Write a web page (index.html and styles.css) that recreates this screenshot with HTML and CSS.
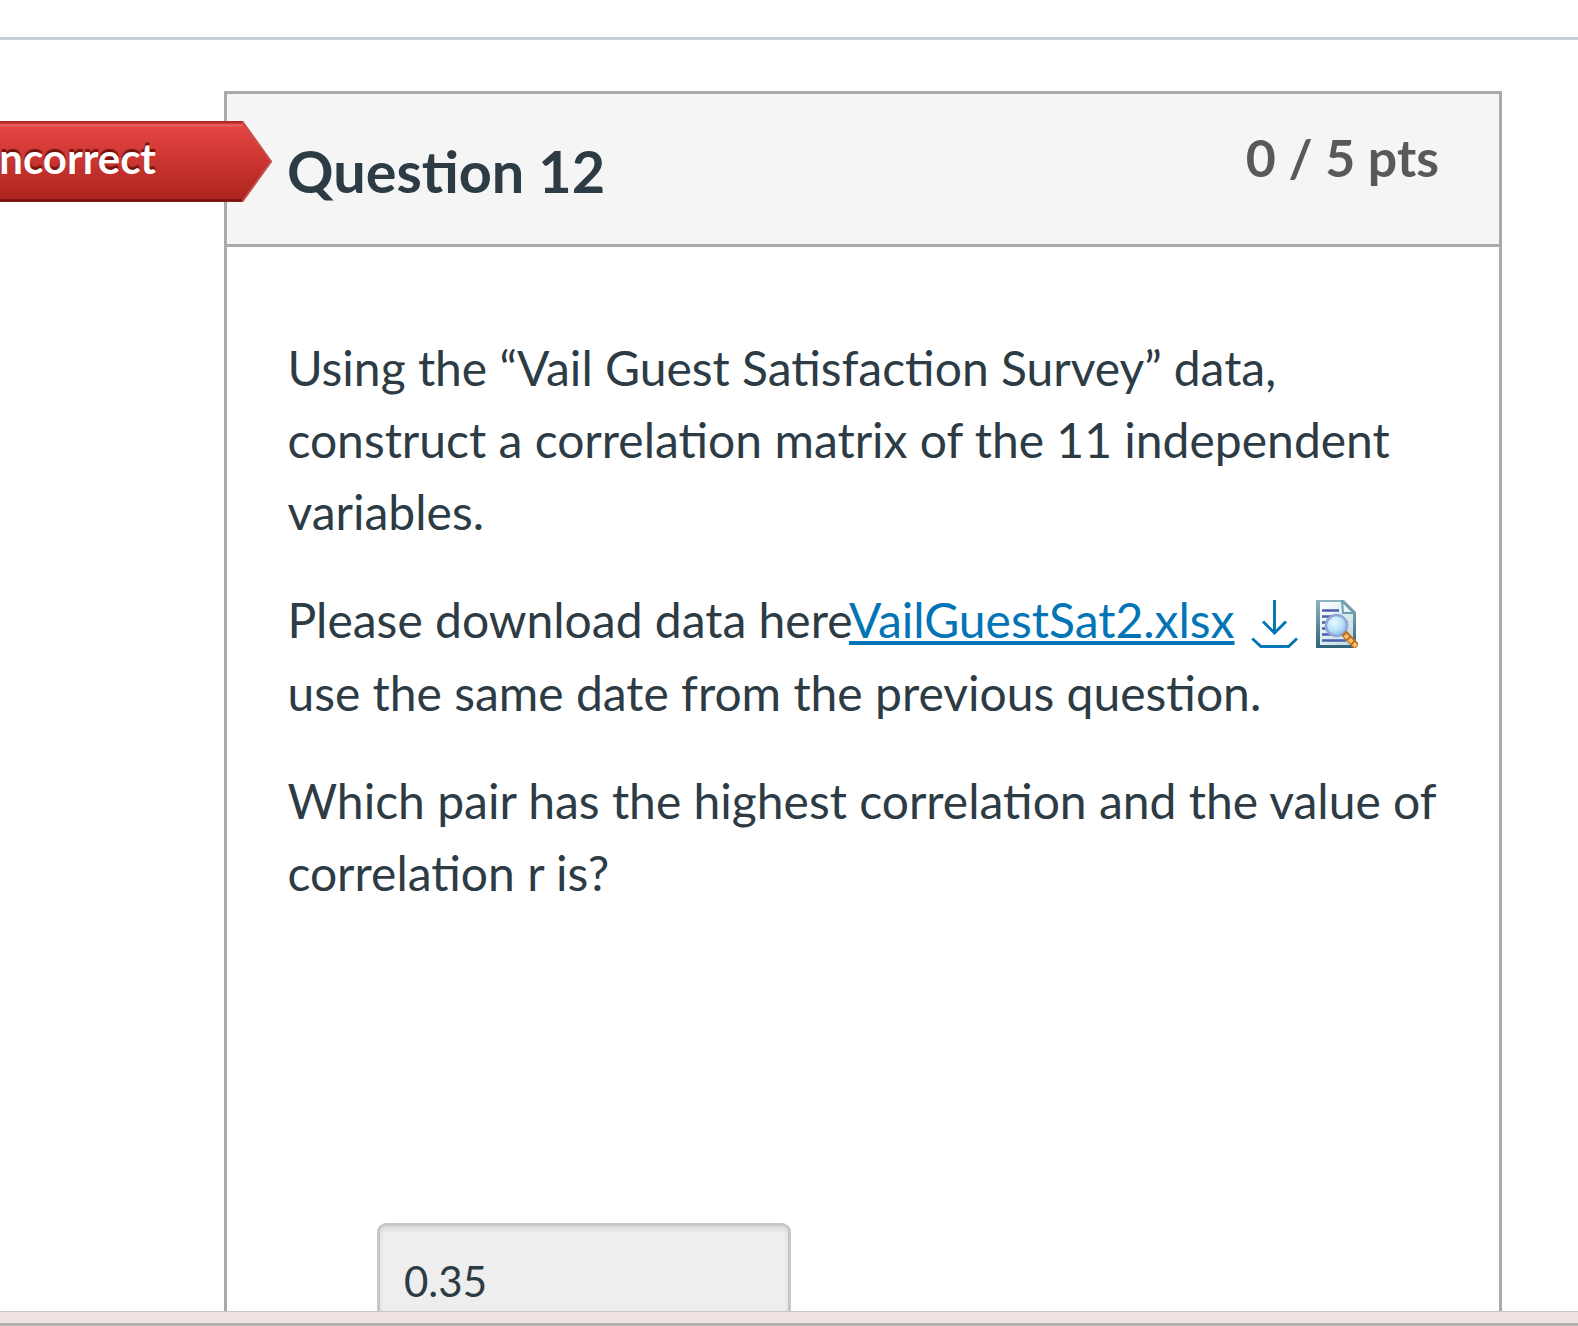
FILE: index.html
```
<!DOCTYPE html>
<html lang="en">
<head>
  <meta charset="UTF-8" />
  <meta name="viewport" content="width=device-width, initial-scale=1.0"/>
  <title>Question 12</title>
  <link rel="stylesheet" href="styles.css">
</head>
<body>

<main class="page">
  <section class="question">
    <!-- Result flag -->
    <div class="flag">
      <svg class="flag-shape" width="272" height="81" viewBox="0 0 272 81">
        <defs>
          <linearGradient id="red" x1="0" y1="0" x2="0" y2="1">
            <stop offset="0" stop-color="#e84a46"/>
            <stop offset="0.1" stop-color="#e34441"/>
            <stop offset="0.9" stop-color="#b22620"/>
            <stop offset="1" stop-color="#a9201c"/>
          </linearGradient>
        </defs>
        <path d="M0 0H242L272 40.5L242 81H0Z" fill="url(#red)"/>
        <path d="M0 4.5H242" stroke="#e8605c" stroke-width="2"/>
        <path d="M242 0L271 40.5L242 81" fill="none" stroke="#c4504e" stroke-width="2"/>
        <path d="M0 1.2H242" stroke="#b12a28" stroke-width="2.4"/>
        <path d="M0 79.4H242" stroke="#75130f" stroke-width="2.4"/>
      </svg>
      <span class="flag-text">Incorrect</span>
    </div>

    <header class="question-header">
      <h1 class="question-name">Question 12</h1>
      <div class="question-points">0 / 5 pts</div>
    </header>

    <!-- Question text -->
    <div class="question-text">
      <p>Using the “Vail Guest Satisfaction Survey” data, construct a correlation matrix of the 11 independent variables.</p>
      <p class="download">
        Please download data here<a class="file-link" href="#">VailGuestSat2.xlsx</a><svg class="download-icon" width="48" height="48" viewBox="0 0 48 48">
          <path d="M23.5 0V33M12 21.5L23.5 33L35 21.5M1.2 38.5L10 46.5H37.5L46 38.5" fill="none" stroke="#0374b5" stroke-width="2.9"/>
        </svg><svg class="preview-icon" width="42" height="48" viewBox="0 0 42 48">
          <defs>
            <linearGradient id="paper" x1="0" y1="0" x2="1" y2="1">
              <stop offset="0" stop-color="#fff"/>
              <stop offset="1" stop-color="#bcd9e2"/>
            </linearGradient>
            <linearGradient id="edge" x1="0" y1="0" x2="0" y2="1">
              <stop offset="0" stop-color="#8db4c2"/>
              <stop offset="1" stop-color="#2f6279"/>
            </linearGradient>
            <radialGradient id="lens" cx="0.4" cy="0.35" r="0.7">
              <stop offset="0" stop-color="#e6fbff"/>
              <stop offset="0.6" stop-color="#b4dff8"/>
              <stop offset="1" stop-color="#8bb2e4"/>
            </radialGradient>
          </defs>
          <path d="M0 0H28L40 12V48H0Z" fill="url(#edge)"/>
          <path d="M4 2H26L37 14V45H4Z" fill="url(#paper)"/>
          <path d="M26 1L38 13H27Z" fill="#e9f4f7" stroke="#6c9cae" stroke-width="2"/>
          <path d="M6 10.5H23M6 16.5H23M6 22.5H32M6 28.5H31M6 34.5H33M6 40.5H30" stroke="#4c60aa" stroke-width="2.6"/>
          <circle cx="20.5" cy="25.5" r="10.5" fill="url(#lens)" stroke="#93a6d6" stroke-width="2.5"/>
          <path d="M28 33L41 47" stroke="#b96f20" stroke-width="7"/>
          <path d="M29 35L41 47" stroke="#ffc269" stroke-width="4" stroke-dasharray="4 2"/>
        </svg><br>
        use the same date from the previous question.
      </p>
      <p>Which pair has the highest correlation and the value of correlation r is?</p>
    </div>

    <div class="answer">
      <input class="answer-input" type="text" value="0.35" readonly>
    </div>
  </section>
</main>

<footer class="bottom-bar"></footer>

</body>
</html>
```
FILE: styles.css
```
* {
  box-sizing: border-box;
}

body {
  margin: 0;
  height: 1326px;
  display: flex;
  flex-direction: column;
  overflow: hidden;
  background: #fff;
  color: #2d3b45;
  font-family: Lato, "Liberation Sans", sans-serif;
  font-size: 48px;
  line-height: 72px;
}

.page {
  flex: 1;
  min-height: 0;
  margin-top: 37px;
  padding: 51px 76px 0 224px;
  border-top: 3px solid #c7cdd1;
  overflow: hidden;
}

.question {
  position: relative;
  height: 1300px;
  border: 3px solid #aaa;
}

.question-header {
  display: flex;
  justify-content: space-between;
  height: 153px;
  padding: 27px 60px 0 60px;
  background: #f5f5f5;
  border-bottom: 3px solid #aaa;
}

.question-name {
  margin: 14px 0 0;
  font-size: 57.6px;
  font-weight: bold;
  line-height: 72px;
}

.question-points {
  color: #595959;
  font-size: 51.84px;
  font-weight: bold;
}

/* Ribbon laid over the left edge of the card */
.flag {
  position: absolute;
  top: 27px;
  left: -227px;
  width: 272px;
  height: 81px;
}

.flag-shape {
  display: block;
}

.flag-text {
  position: absolute;
  top: 1px;
  right: 116px;
  color: #fff;
  font-size: 42px;
  font-weight: bold;
  text-shadow: 0 -3px 1px #761410;
}

.question-text {
  height: 893px;
  padding: 85px 40px 0 60.4px;
}

.question-text p {
  margin: 0 0 36px;
}

.question-text .download {
  line-height: 72.6px;
}

.file-link {
  color: #0374b5;
  text-decoration: underline;
  text-decoration-thickness: 4px;
  text-underline-offset: 3px;
  text-decoration-skip-ink: none;
}

.download-icon {
  margin-left: 16px;
  vertical-align: -10px;
}

.preview-icon {
  margin-left: 17.6px;
  vertical-align: -10px;
}

.answer {
  padding: 83px 0 0 150px;
}

.answer-input {
  display: block;
  width: 414px;
  height: 114px;
  padding: 1px 24px 0;
  border: 3px solid #c7c7c7;
  border-radius: 9px;
  background: #eee;
  box-shadow: inset 0 3px 5px rgba(0, 0, 0, 0.09);
  color: #2d3b45;
  font-family: inherit;
  font-size: 42px;
}

.bottom-bar {
  height: 15px;
  border-top: 1px solid #cfc2c5;
  border-bottom: 3px solid #b4b2af;
  background: #f0e2e1;
}
```
